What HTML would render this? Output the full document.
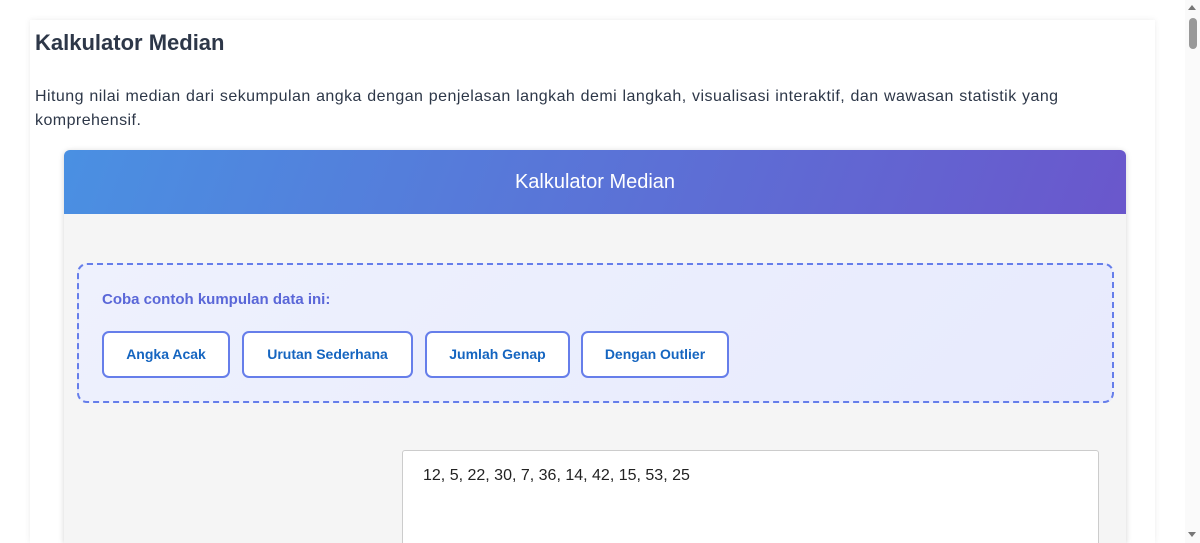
<!DOCTYPE html>
<html><head><meta charset="utf-8"><style>
*{box-sizing:border-box;margin:0;padding:0}
html,body{width:1200px;height:543px;max-height:543px;overflow:hidden;background:#fff;font-family:"Liberation Sans",sans-serif;color:#2d3748}
.outer{position:absolute;left:30px;top:20px;width:1125px;height:523px;background:#fff;box-shadow:0 0 6px rgba(0,0,0,.08)}
h1{position:absolute;left:5px;top:10px;font-size:22px;font-weight:bold;color:#2d3748}
p.desc{position:absolute;left:5px;top:65px;width:1060px;font-size:16px;line-height:24px;color:#2d3748;letter-spacing:0.45px;word-spacing:0.5px}
.card{position:absolute;left:34px;top:130px;width:1062px;height:393px;background:#f5f5f5;border-radius:6px 6px 0 0;box-shadow:0 1px 6px rgba(0,0,0,.18);overflow:hidden}
.hdr{height:64px;background:linear-gradient(110deg,#4a90e2,#6a57cc);color:#fff;font-size:20px;text-align:center;line-height:64px}
.ex{position:absolute;left:13px;top:113px;width:1037px;height:140px;border:2px dashed #667eea;border-radius:10px;background:linear-gradient(135deg,#eef1fd,#e7eafd)}
.ex .t{position:absolute;left:23px;top:26px;font-size:15px;font-weight:bold;color:#5a67d8}
.btn{position:absolute;top:66px;height:47px;border:2px solid #667eea;border-radius:7px;background:#fff;color:#1565c0;font-weight:bold;font-size:14px;text-align:center;line-height:43px}
.ta{position:absolute;left:338px;top:300px;width:697px;height:120px;background:#fff;border:1px solid #ccc;border-radius:3px;padding:16px 20px;font-size:16px;color:#222}
.sb{position:absolute;right:0;top:0;width:15px;height:543px;background:#fafafa}
.th{position:absolute;left:4px;top:18px;width:8px;height:31px;background:#999;border-radius:4px}
</style></head><body>
<div class="outer">
<h1>Kalkulator Median</h1>
<p class="desc">Hitung nilai median dari sekumpulan angka dengan penjelasan langkah demi langkah, visualisasi interaktif, dan wawasan statistik yang komprehensif.</p>
<div class="card">
<div class="hdr">Kalkulator Median</div>
<div class="ex">
<div class="t">Coba contoh kumpulan data ini:</div>
<div class="btn" style="left:23px;width:128px">Angka Acak</div>
<div class="btn" style="left:163px;width:171px">Urutan Sederhana</div>
<div class="btn" style="left:346px;width:145px">Jumlah Genap</div>
<div class="btn" style="left:502px;width:148px">Dengan Outlier</div>
</div>
<div class="ta">12, 5, 22, 30, 7, 36, 14, 42, 15, 53, 25</div>
</div>
</div>
<div class="sb"><div class="th"></div>
<div style="position:absolute;left:3px;top:5px;border:4px solid transparent;border-bottom:5px solid #777;border-top:0"></div>
<div style="position:absolute;left:3px;bottom:6px;border:4px solid transparent;border-top:5px solid #777;border-bottom:0"></div>
</div>
</body></html>
